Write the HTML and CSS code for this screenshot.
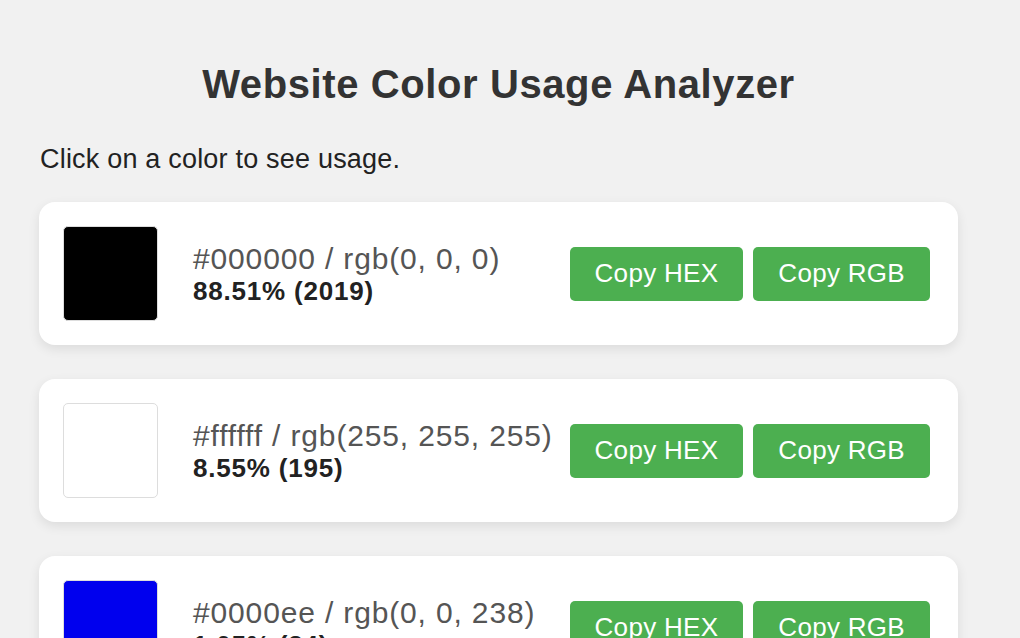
FILE: index.html
```html
<!DOCTYPE html>
<html lang="en">
<head>
  <meta charset="UTF-8" />
  <title>Website Color Usage Analyzer</title>
  <link rel="stylesheet" href="styles.css">
</head>
<body>
  <div class="container">
    <h1>Website Color Usage Analyzer</h1>
    <p class="hint">Click on a color to see usage.</p>

    <div id="colorList">
      <div class="color-card">
        <div class="swatch" style="background: #000000;"></div>
        <div class="color-info">
          <div class="color-code">#000000 / rgb(0, 0, 0)</div>
          <div class="color-usage">88.51% (2019)</div>
        </div>
        <div class="button-group">
          <button onclick="copyText('#000000')">Copy HEX</button>
          <button onclick="copyText('rgb(0, 0, 0)')">Copy RGB</button>
        </div>
      </div>

      <div class="color-card">
        <div class="swatch" style="background: #ffffff;"></div>
        <div class="color-info">
          <div class="color-code">#ffffff / rgb(255, 255, 255)</div>
          <div class="color-usage">8.55% (195)</div>
        </div>
        <div class="button-group">
          <button onclick="copyText('#ffffff')">Copy HEX</button>
          <button onclick="copyText('rgb(255, 255, 255)')">Copy RGB</button>
        </div>
      </div>

      <div class="color-card">
        <div class="swatch" style="background: #0000ee;"></div>
        <div class="color-info">
          <div class="color-code">#0000ee / rgb(0, 0, 238)</div>
          <div class="color-usage">1.05% (24)</div>
        </div>
        <div class="button-group">
          <button onclick="copyText('#0000ee')">Copy HEX</button>
          <button onclick="copyText('rgb(0, 0, 238)')">Copy RGB</button>
        </div>
      </div>
    </div>
  </div>

  <script>
    function copyText(value) {
      navigator.clipboard.writeText(value);
    }
  </script>
</body>
</html>
```

FILE: styles.css
```css
html,
body {
  overflow: hidden;
}

body {
  font-family: "Liberation Sans", Arial, sans-serif;
  background: #f1f1f1;
  margin: 0;
  padding: 0;
}

.container {
  width: 919px;
  padding: 60px 0 40px 39px;
}

h1 {
  margin: 0;
  font-size: 40px;
  line-height: 48px;
  letter-spacing: 0.6px;
  text-align: center;
  color: #333;
}

.hint {
  margin: 35px 0 27px 1px;
  font-size: 27px;
  line-height: 32px;
  letter-spacing: 0.2px;
  color: #222;
}

.color-card {
  display: flex;
  align-items: center;
  background: #fff;
  border-radius: 16px;
  padding: 24px 28px 24px 24px;
  margin-bottom: 34px;
  box-shadow: 0 4px 12px rgba(0, 0, 0, 0.09);
}

.swatch {
  width: 95px;
  height: 95px;
  flex-shrink: 0;
  box-sizing: border-box;
  border: 1px solid #ddd;
  border-radius: 5px;
  margin-right: 35px;
}

.color-info {
  flex: 1;
}

.color-code {
  font-size: 30px;
  line-height: 34px;
  letter-spacing: 0.85px;
  color: #555;
}

.color-usage {
  font-size: 26px;
  line-height: 30px;
  letter-spacing: 0.8px;
  font-weight: bold;
  color: #222;
}

.button-group {
  display: flex;
  gap: 10px;
}

button {
  font-family: "Liberation Sans", Arial, sans-serif;
  font-size: 26px;
  line-height: 30px;
  letter-spacing: 0.3px;
  color: #fff;
  background: #4caf50;
  border: none;
  border-radius: 5px;
  padding: 11px 25px 13px;
  cursor: pointer;
}
```
